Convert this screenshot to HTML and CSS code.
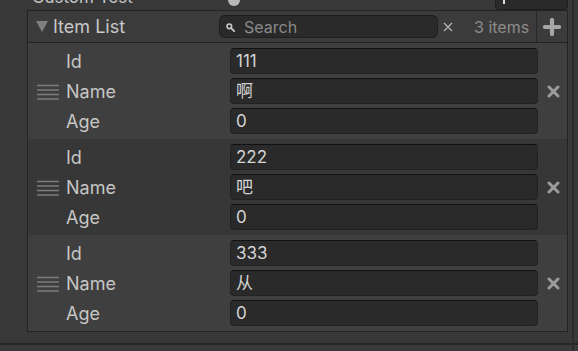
FILE: index.html
```html
<!DOCTYPE html>
<html lang="en">
<head>
  <meta charset="UTF-8" />
  <title>Item List</title>
  <link rel="stylesheet" href="styles.css">
</head>
<body>
  <div class="top">
    <div class="top-row">
      <span class="top-label">Custom Test</span>
      <span class="top-dot"></span>
      <span class="top-field"><span class="top-mark"></span></span>
    </div>
  </div>

  <div class="list">
    <div class="list-header">
      <span class="fold"></span>
      <span class="title">Item List</span>
      <div class="search">
        <svg class="lens" width="9" height="9" viewBox="0 0 9 9">
          <circle cx="3.3" cy="3.3" r="2.3" fill="none" stroke="#c8c8c8" stroke-width="1.6"/>
          <path d="M5 5 L8.2 8.2" stroke="#c8c8c8" stroke-width="1.8" stroke-linecap="round"/>
        </svg>
        <span class="placeholder">Search</span>
      </div>
      <svg class="clear" width="10" height="10" viewBox="0 0 10 10">
        <path d="M1 1 L9 9 M9 1 L1 9" stroke="#b4b4b4" stroke-width="1.3"/>
      </svg>
      <span class="count">3 items</span>
      <div class="add">
        <svg width="18" height="18" viewBox="0 0 18 18">
          <path d="M9 2 V16 M2 9 H16" stroke="#a6a6a6" stroke-width="4.2" stroke-linecap="round"/>
        </svg>
      </div>
    </div>

    <div class="items" id="items"></div>
  </div>

  <div class="bottom"></div>

  <script>
    const items = [
      { id: '111', name: '啊', age: '0' },
      { id: '222', name: '吧', age: '0' },
      { id: '333', name: '从', age: '0' }
    ];

    const lista = document.getElementById('items');

    items.forEach((item) => {
      const div = document.createElement('div');
      div.className = 'item';
      div.innerHTML = `
        <div class="handle">
          <svg width="22" height="16" viewBox="0 0 22 16">
            <path d="M0 1.5 H22 M0 6 H22 M0 10.5 H22 M0 15 H22" stroke="#7c7c7c" stroke-width="1.3"/>
          </svg>
        </div>
        <div class="fields">
          <div class="row"><span class="label">Id</span><span class="field">${item.id}</span></div>
          <div class="row"><span class="label">Name</span><span class="field">${item.name}</span></div>
          <div class="row"><span class="label">Age</span><span class="field">${item.age}</span></div>
        </div>
        <div class="remove">
          <svg width="13" height="13" viewBox="0 0 13 13">
            <path d="M2 2 L11 11 M11 2 L2 11" stroke="#9c9c9c" stroke-width="3" stroke-linecap="round"/>
          </svg>
        </div>
      `;
      lista.appendChild(div);
    });
  </script>
</body>
</html>
```

FILE: styles.css
```css
* {
  box-sizing: border-box;
  margin: 0;
  padding: 0;
}
body {
  font-family: Inter, 'Noto Sans CJK SC', sans-serif;
  background: #383838;
  color: #c4c4c4;
  font-size: 17px;
  width: 578px;
  height: 351px;
  overflow: hidden;
  position: relative;
}
body::after {
  content: '';
  position: absolute;
  top: 0;
  bottom: 0;
  left: 572px;
  width: 2px;
  background: #2b2b2b;
}
.top {
  height: 10px;
  overflow: hidden;
}
.top-row {
  height: 24px;
  margin-top: -15px;
  display: flex;
  align-items: center;
  padding-left: 32px;
}
.top-label {
  width: 196px;
}
.top-dot {
  width: 12px;
  height: 12px;
  border-radius: 50%;
  background: #b8b8b8;
  margin-top: 6px;
}
.top-field {
  margin-left: auto;
  margin-right: 10px;
  width: 73px;
  height: 22px;
  background: #2a2a2a;
  border: 1px solid #1f1f1f;
  border-radius: 4px;
  margin-top: 3px;
  position: relative;
}
.top-mark {
  position: absolute;
  left: 7px;
  bottom: 5px;
  width: 2px;
  height: 5px;
  background: #dcdcdc;
}
.list {
  margin-left: 27px;
  width: 541px;
  border: 1px solid #232323;
}
.list-header {
  height: 32px;
  display: flex;
  align-items: center;
  background: #3b3b3b;
  border-bottom: 1px solid #222;
}
.fold {
  margin-left: 8px;
  width: 0;
  height: 0;
  border-left: 6px solid transparent;
  border-right: 6px solid transparent;
  border-top: 11px solid #7f7f7f;
}
.title {
  flex: 1;
  margin-left: 5px;
  font-size: 18px;
  color: #c8c8c8;
}
.search {
  width: 219px;
  height: 23px;
  background: #2a2a2a;
  border: 1px solid #202020;
  border-top-color: #1a1a1a;
  border-radius: 6px;
  display: flex;
  align-items: center;
  padding-left: 6px;
}
.lens {
  margin-top: 1px;
}
.placeholder {
  margin-left: 9px;
  color: #8a8a8a;
  font-size: 16px;
}
.clear {
  margin-left: 5px;
}
.count {
  margin-left: 21px;
  width: 62px;
  color: #8c8c8c;
  font-size: 16px;
}
.add {
  width: 31px;
  height: 31px;
  border-left: 1px solid #272727;
  display: flex;
  align-items: center;
  justify-content: center;
}
.item {
  display: flex;
  height: 96px;
  padding: 5px 0;
  background: #3f3f3f;
}
.item:nth-child(2) {
  background: #373737;
}
.handle {
  width: 38px;
  padding-left: 9px;
  display: flex;
  align-items: center;
  padding-top: 1px;
}
.fields {
  display: flex;
  flex-direction: column;
  gap: 4px;
}
.row {
  display: flex;
  align-items: center;
  height: 26px;
}
.label {
  width: 164px;
  font-size: 18px;
  color: #c6c6c6;
}
.field {
  width: 308px;
  height: 26px;
  line-height: 24px;
  padding-left: 5px;
  background: #2a2a2a;
  border: 1px solid #222;
  border-top-color: #111;
  border-radius: 4px;
  color: #d4d4d4;
  font-size: 17px;
}
.remove {
  width: 29px;
  display: flex;
  align-items: center;
  justify-content: center;
  padding-left: 2px;
}
.bottom {
  margin-top: 11px;
  height: 20px;
  border-top: 2px solid #262626;
  background: #3a3a3a;
}
```
